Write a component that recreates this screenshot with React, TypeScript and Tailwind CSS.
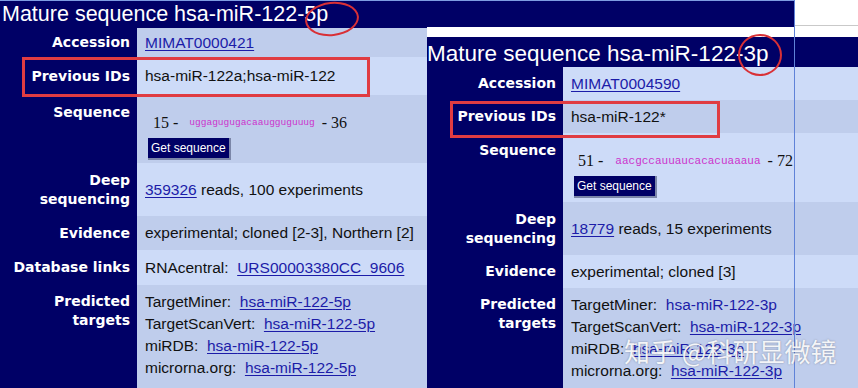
import React from "react";

const sans = "font-['Liberation_Sans',Arial,sans-serif]";
const label = "font-['DejaVu_Sans',Verdana,sans-serif] font-bold text-[14px] leading-[19px] text-white text-right";
const link = "text-[#1c1ca8] underline underline-offset-2";

function Row({
  lw,
  h,
  tone,
  name,
  labelTop,
  valueTop,
  children,
}: {
  lw: string;
  h: string;
  tone: string;
  name: React.ReactNode;
  labelTop?: string;
  valueTop?: string;
  children: React.ReactNode;
}) {
  return (
    <div className={`flex ${h}`}>
      <div
        className={`${lw} shrink-0 bg-[#000066] flex justify-end pr-[7px] ${labelTop ? `items-start ${labelTop}` : "items-center"}`}
      >
        <div className={label}>{name}</div>
      </div>
      <div
        className={`flex-1 ${tone} pl-[8px] flex ${valueTop ? `flex-col items-start ${valueTop}` : "items-center"} ${sans} text-[15.5px] text-[#111]`}
      >
        {children}
      </div>
    </div>
  );
}

function GetSeq() {
  return (
    <div className={`mt-[5px] h-[22px] bg-[#000066] border-r-2 border-b-2 border-[#7b86a8] px-[3px] flex items-center text-white text-[12px] ${sans}`}>
      Get sequence
    </div>
  );
}

function Targets({ p, firstPlain }: { p: string; firstPlain?: boolean }) {
  const l = `miR-122-${p}`;
  return (
    <div className="leading-[22px]">
      <div>
        TargetMiner:&nbsp; <span className={firstPlain ? "text-[#1c1ca8]" : link}>hsa-{l}</span>
      </div>
      <div>
        TargetScanVert:&nbsp; <span className={link}>hsa-{l}</span>
      </div>
      <div>
        miRDB:&nbsp; <span className={link}>hsa-{l}</span>
      </div>
      <div>
        microrna.org:&nbsp; <span className={link}>hsa-{l}</span>
      </div>
    </div>
  );
}

const light = "bg-[#cddbf8]";
const dark = "bg-[#bfcdec]";

export default function App() {
  return (
    <div className="relative w-[858px] h-[388px] overflow-hidden bg-white">
      {/* left / back page */}
      <div className="flex">
        <div className="w-[794px] flex flex-col">
          <div className={`h-[28px] bg-[#000066] border-t border-[#7e9ce2] pl-[2px] text-white text-[21.5px] leading-[26px] ${sans}`}>
            Mature sequence hsa-miR-122-5p
          </div>
          <Row lw="w-[137px]" h="h-[29px]" tone={dark} name="Accession">
            <span className={link}>MIMAT0000421</span>
          </Row>
          <Row lw="w-[137px]" h="h-[38px]" tone={light} name="Previous IDs">
            hsa-miR-122a;hsa-miR-122
          </Row>
          <Row lw="w-[137px]" h="h-[68px]" tone={dark} name="Sequence" labelTop="pt-[8px]" valueTop="pt-[18px]">
            <div className="h-[20px] flex items-center pl-[8px]">
              <span className="font-['Liberation_Serif',serif] text-[16px]">15 -</span>
              <span className="font-['Liberation_Mono',monospace] text-[9.5px] text-[#cc33cc] ml-[11px]">
                uggagugugacaaugguguuug
              </span>
              <span className="font-['Liberation_Serif',serif] text-[16px] ml-[7px]">- 36</span>
            </div>
            <div className="pl-[3px]">
              <GetSeq />
            </div>
          </Row>
          <Row
            lw="w-[137px]"
            h="h-[53px]"
            tone={light}
            name={
              <>
                Deep
                <br />
                sequencing
              </>
            }
          >
            <span>
              <span className={link}>359326</span> reads, 100 experiments
            </span>
          </Row>
          <Row lw="w-[137px]" h="h-[34px]" tone={dark} name="Evidence">
            experimental; cloned [2-3], Northern [2]
          </Row>
          <Row lw="w-[137px]" h="h-[35px]" tone={light} name="Database links">
            <span>
              RNAcentral:&nbsp; <span className={link}>URS00003380CC_9606</span>
            </span>
          </Row>
          <Row
            lw="w-[137px]"
            h="h-[103px]"
            tone={dark}
            name={
              <>
                Predicted
                <br />
                targets
              </>
            }
            labelTop="pt-[7px]"
            valueTop="pt-[6px]"
          >
            <Targets p="5p" />
          </Row>
        </div>
        <div className="flex-1 h-[26px] border-b border-[#c9c9c9]" />
      </div>

      {/* right / front page */}
      <div className="absolute left-[427px] top-[27px] w-[431px] h-[361px] bg-white pt-[10px] flex flex-col">
        <div className={`h-[30px] bg-[#000066] text-white text-[22.5px] leading-[34px] ${sans}`}>
          Mature sequence hsa-miR-122-3p
        </div>
        <Row lw="w-[136px]" h="h-[33px]" tone={light} name="Accession">
          <span className={link}>MIMAT0004590</span>
        </Row>
        <Row lw="w-[136px]" h="h-[33px]" tone={dark} name="Previous IDs">
          hsa-miR-122*
        </Row>
        <Row lw="w-[136px]" h="h-[69px]" tone={light} name="Sequence" labelTop="pt-[8px]" valueTop="pt-[18px]">
          <div className="h-[20px] flex items-center pl-[7px]">
            <span className="font-['Liberation_Serif',serif] text-[16px]">51 -</span>
            <span className="font-['Liberation_Mono',monospace] text-[11px] text-[#cc33cc] ml-[12px]">
              aacgccauuaucacacuaaaua
            </span>
            <span className="font-['Liberation_Serif',serif] text-[16px] ml-[7px]">- 72</span>
          </div>
          <div className="pl-[3px]">
            <GetSeq />
          </div>
        </Row>
        <Row
          lw="w-[136px]"
          h="h-[53px]"
          tone={dark}
          name={
            <>
              Deep
              <br />
              sequencing
            </>
          }
        >
          <span>
            <span className={link}>18779</span> reads, 15 experiments
          </span>
        </Row>
        <Row lw="w-[136px]" h="h-[33px]" tone={light} name="Evidence">
          experimental; cloned [3]
        </Row>
        <Row
          lw="w-[136px]"
          h="h-[100px]"
          tone={dark}
          name={
            <>
              Predicted
              <br />
              targets
            </>
          }
          labelTop="pt-[7px]"
          valueTop="pt-[6px]"
        >
          <Targets p="3p" firstPlain />
        </Row>
      </div>

      {/* page edge line */}
      <div className="absolute left-[794px] top-0 w-px h-full bg-[#5f82d8]" />

      {/* annotations */}
      <div className="absolute left-[22px] top-[57px] w-[348px] h-[40px] border-[3px] border-[#e03c42]" />
      <div className="absolute left-[450px] top-[101px] w-[270px] h-[37px] border-[3px] border-[#e03c42]" />
      <div className="absolute left-[305px] top-[2px] w-[54px] h-[34px] rounded-[50%] border-2 border-[#d93036] -rotate-6" />
      <div className="absolute left-[738px] top-[34px] w-[44px] h-[42px] rounded-[50%] border-2 border-[#d93036]" />

      {/* watermark */}
      <div className="absolute left-[624px] top-[333px] text-[26px] leading-[36px] text-white/90 font-['Noto_Sans_CJK_SC',sans-serif] [text-shadow:0_0_2px_rgba(0,0,0,0.35)] whitespace-nowrap">
        知乎 @科研显微镜
      </div>
    </div>
  );
}
